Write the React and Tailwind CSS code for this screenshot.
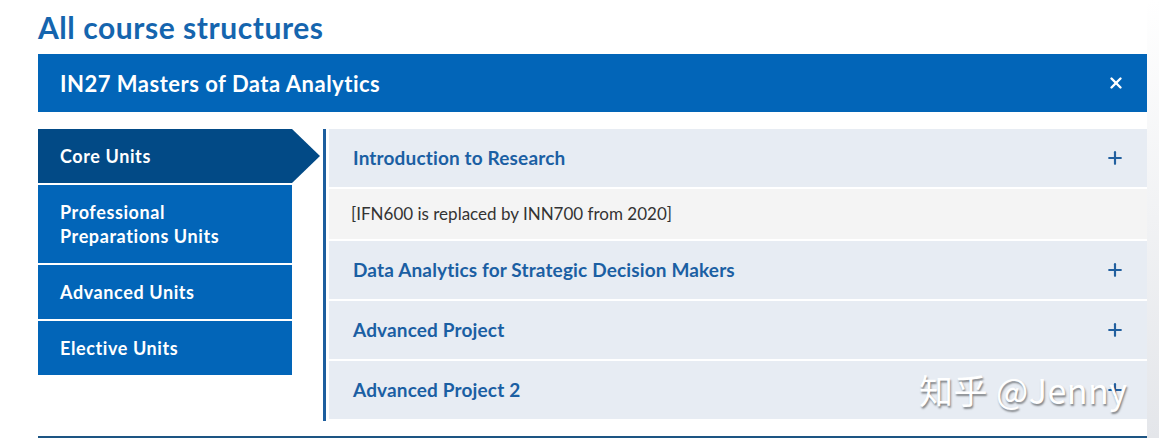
import { Plus, X } from "lucide-react";

const navItems = [
  { label: "Core Units", h: "h-[54px]", active: true },
  { label: "Professional Preparations Units", h: "h-[78px]" },
  { label: "Advanced Units", h: "h-[54px]" },
  { label: "Elective Units", h: "h-[54px]" },
];

const units = [
  { title: "Introduction to Research", note: "[IFN600 is replaced by INN700 from 2020]" },
  { title: "Data Analytics for Strategic Decision Makers" },
  { title: "Advanced Project" },
  { title: "Advanced Project 2" },
];

// ── Nav item ────────────────────────────────
function NavItem({ label, h, active }) {
  return (
    <div
      className={`relative ${h} flex items-center pl-[22px] pr-6 text-[18px] font-bold leading-[24px] tracking-[0.6px] text-white ${
        active ? "bg-[#024a86]" : "bg-[#0265b8]"
      }`}
    >
      <span className={label.length > 20 ? "w-[175px]" : ""}>{label}</span>
      {active && (
        <svg className="absolute left-full top-0 h-full w-[28px]" viewBox="0 0 28 54" preserveAspectRatio="none">
          <polygon points="0,0 28,27 0,54" fill="#024a86" />
        </svg>
      )}
    </div>
  );
}

// ── Unit row ────────────────────────────────
function UnitRow({ title }) {
  return (
    <div className="h-[58px] flex items-center justify-between bg-[#e7ecf3] pl-6 pr-[22px]">
      <span className="text-[19px] font-bold tracking-[0.15px] text-[#1b5fa3]">{title}</span>
      <Plus size={20} strokeWidth={2.6} className="text-[#22609f]" />
    </div>
  );
}

export default function App() {
  return (
    <div className="relative w-[1159px] h-[438px] overflow-hidden bg-white font-['Lato',sans-serif] flex">
      <div className="w-[1147px] pl-[38px]">
        <h1 className="pt-[9px] h-[54px] text-[30px] leading-[36px] font-bold text-[#1565ae] tracking-[0.55px]">
          All course structures
        </h1>

        {/* Header bar */}
        <div className="h-[58px] bg-[#0265b8] flex items-center justify-between pl-[22px] pr-[22px]">
          <span className="text-[22px] font-bold tracking-[0.5px] text-white">IN27 Masters of Data Analytics</span>
          <X size={18} strokeWidth={3.2} className="text-white" />
        </div>

        {/* Body */}
        <div className="mt-[17px] flex">
          <div className="w-[254px] flex flex-col gap-[2px]">
            {navItems.map((n) => (
              <NavItem key={n.label} {...n} />
            ))}
          </div>

          <div className="ml-[31px] flex-1 border-l-[3px] border-[#1d5e9e] pl-[3px] h-[292px]">
            <div className="flex flex-col gap-[2px]">
              {units.map((u) => (
                <div key={u.title} className="flex flex-col gap-[2px]">
                  <UnitRow title={u.title} />
                  {u.note && (
                    <div className="h-[50px] flex items-center bg-[#f4f4f4] pl-[22px] text-[17px] text-[#333333]">
                      {u.note}
                    </div>
                  )}
                </div>
              ))}
            </div>
          </div>
        </div>

        <div className="mt-[15px] h-[2px] bg-[#1d5583]" />
      </div>

      {/* right edge shade */}
      <div className="flex-1 bg-gradient-to-b from-white via-[#f1f2f4] to-[#e4e6ea]" />

      {/* watermark */}
      <div className="absolute left-[919px] top-[364px] text-[34px] font-['Noto_Sans_CJK_SC',sans-serif] text-white [text-shadow:1px_2px_2px_rgba(0,0,0,0.45)] tracking-[0.5px]">
        知乎 @Jenny
      </div>
    </div>
  );
}
